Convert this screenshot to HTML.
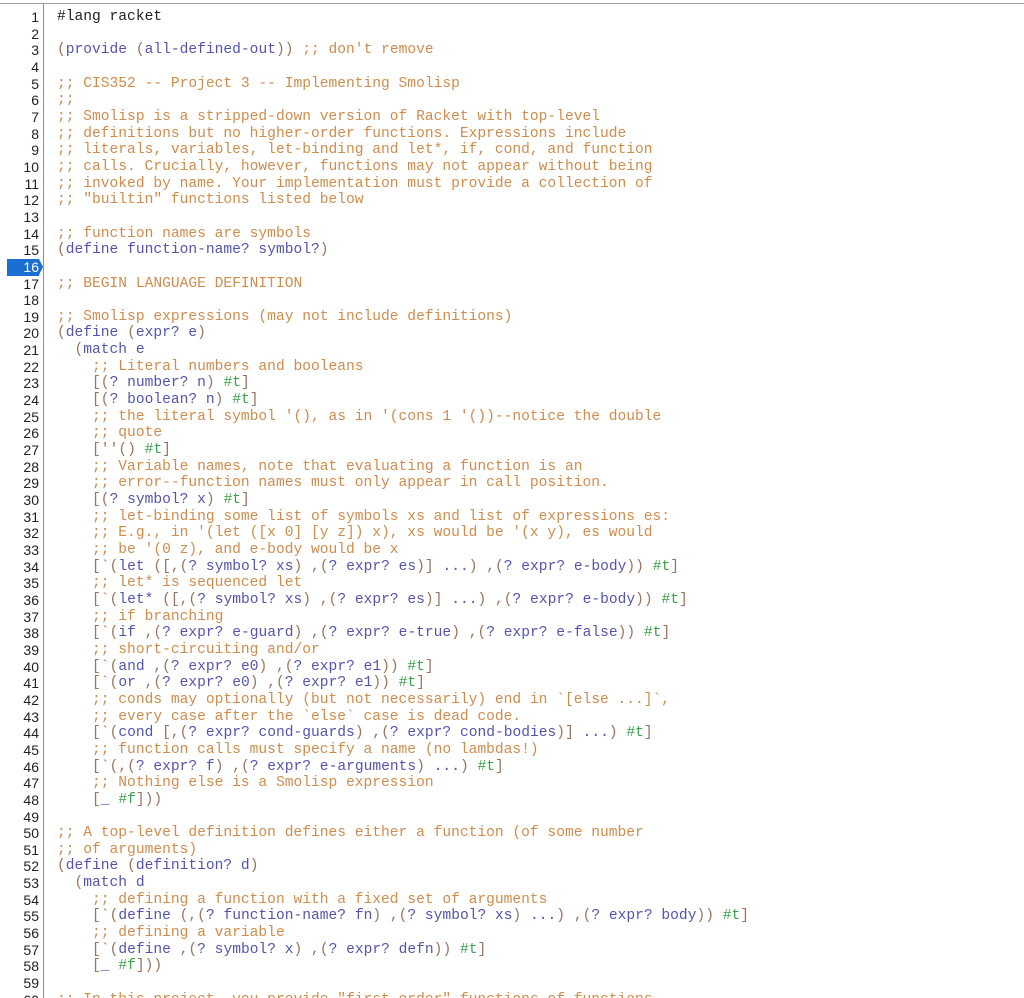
<!DOCTYPE html>
<html><head><meta charset="utf-8">
<style>
html,body{margin:0;padding:0;background:#fff;width:1024px;height:998px;overflow:hidden;position:relative}
#top{position:absolute;left:0;top:3px;width:1024px;height:1px;background:#a0a0a0}
#gut{position:absolute;left:0;top:9px;width:39px;text-align:right;font-family:"Liberation Sans",sans-serif;font-size:14px;line-height:16.66px;color:#222}
#gut div{height:16.66px;position:relative}
#gut .hl{background:#1a6fd0;color:#fff;margin-left:7px;padding-right:0}
#gut .hl:after{content:"";position:absolute;right:-4px;top:0;border-left:4px solid #1a6fd0;border-top:8.33px solid transparent;border-bottom:8.33px solid transparent}
#bar{position:absolute;left:43px;top:4px;width:1px;height:994px;background:#909090}
pre{position:absolute;left:57px;top:9px;margin:0;font-family:"Liberation Mono",monospace;font-size:14.6px;line-height:16.66px;color:#5454b0}
.c{color:#d08c4c}.p{color:#9a7460}.g{color:#3aa24a}.k{color:#222}
</style></head><body>
<div id="top"></div>
<div id="bar"></div>
<div id="gut"></div>
<pre id="code">#lang racket

(provide (all-defined-out)) ;; don't remove

;; CIS352 -- Project 3 -- Implementing Smolisp
;;
;; Smolisp is a stripped-down version of Racket with top-level
;; definitions but no higher-order functions. Expressions include
;; literals, variables, let-binding and let*, if, cond, and function
;; calls. Crucially, however, functions may not appear without being
;; invoked by name. Your implementation must provide a collection of
;; "builtin" functions listed below

;; function names are symbols
(define function-name? symbol?)

;; BEGIN LANGUAGE DEFINITION

;; Smolisp expressions (may not include definitions)
(define (expr? e)
  (match e
    ;; Literal numbers and booleans
    [(? number? n) #t]
    [(? boolean? n) #t]
    ;; the literal symbol '(), as in '(cons 1 '())--notice the double
    ;; quote
    [''() #t]
    ;; Variable names, note that evaluating a function is an
    ;; error--function names must only appear in call position.
    [(? symbol? x) #t]
    ;; let-binding some list of symbols xs and list of expressions es:
    ;; E.g., in '(let ([x 0] [y z]) x), xs would be '(x y), es would
    ;; be '(0 z), and e-body would be x
    [`(let ([,(? symbol? xs) ,(? expr? es)] ...) ,(? expr? e-body)) #t]
    ;; let* is sequenced let
    [`(let* ([,(? symbol? xs) ,(? expr? es)] ...) ,(? expr? e-body)) #t]
    ;; if branching
    [`(if ,(? expr? e-guard) ,(? expr? e-true) ,(? expr? e-false)) #t]
    ;; short-circuiting and/or
    [`(and ,(? expr? e0) ,(? expr? e1)) #t]
    [`(or ,(? expr? e0) ,(? expr? e1)) #t]
    ;; conds may optionally (but not necessarily) end in `[else ...]`,
    ;; every case after the `else` case is dead code.
    [`(cond [,(? expr? cond-guards) ,(? expr? cond-bodies)] ...) #t]
    ;; function calls must specify a name (no lambdas!)
    [`(,(? expr? f) ,(? expr? e-arguments) ...) #t]
    ;; Nothing else is a Smolisp expression
    [_ #f]))

;; A top-level definition defines either a function (of some number
;; of arguments)
(define (definition? d)
  (match d
    ;; defining a function with a fixed set of arguments
    [`(define (,(? function-name? fn) ,(? symbol? xs) ...) ,(? expr? body)) #t]
    ;; defining a variable
    [`(define ,(? symbol? x) ,(? expr? defn)) #t]
    [_ #f]))

;; In this project, you provide "first-order" functions of functions</pre>
<script>
var pre=document.getElementById('code');
var lines=pre.textContent.split('\n');
function esc(s){return s.replace(/&/g,'&amp;').replace(/</g,'&lt;').replace(/>/g,'&gt;');}
var out=[];
lines.forEach(function(l,i){
  if(i===0){out.push('<span class="k">'+esc(l)+'</span>');return;}
  var ci=l.indexOf(';;');
  var code=ci>=0?l.slice(0,ci):l, com=ci>=0?l.slice(ci):'';
  var h=esc(code).replace(/(#t|#f)|([()\[\]`,'])/g,function(m,a,b){return a?'<span class="g">'+a+'</span>':'<span class="p">'+b+'</span>';});
  if(com)h+='<span class="c">'+esc(com)+'</span>';
  out.push(h);
});
pre.innerHTML=out.join('\n');
var g=document.getElementById('gut'),s='';
for(var i=1;i<=60;i++)s+='<div'+(i===16?' class="hl"':'')+'>'+i+'</div>';
g.innerHTML=s;
</script>
</body></html>
